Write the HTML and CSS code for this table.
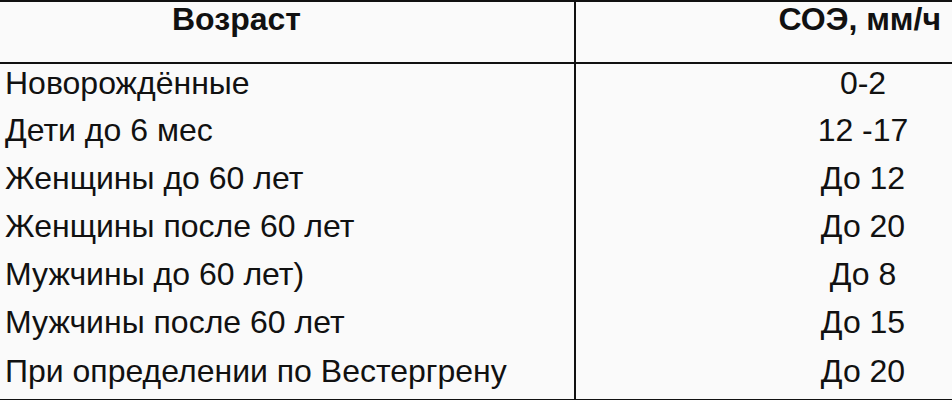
FILE: index.html
```html
<!DOCTYPE html>
<html lang="ru">
<head>
<meta charset="utf-8">
<link rel="stylesheet" href="styles.css">
</head>
<body>
<table class="esr">
  <colgroup>
    <col class="col-age">
    <col class="col-val">
  </colgroup>
  <thead>
    <tr>
      <th class="age-head">Возраст</th>
      <th class="val-head">СОЭ, мм/ч</th>
    </tr>
  </thead>
  <tbody>
    <tr><td class="age">Новорождённые</td><td class="val">0-2</td></tr>
    <tr><td class="age">Дети до 6 мес</td><td class="val">12 -17</td></tr>
    <tr><td class="age">Женщины до 60 лет</td><td class="val">До 12</td></tr>
    <tr><td class="age">Женщины после 60 лет</td><td class="val">До 20</td></tr>
    <tr><td class="age">Мужчины до 60 лет)</td><td class="val">До 8</td></tr>
    <tr><td class="age">Мужчины после 60 лет</td><td class="val">До 15</td></tr>
    <tr><td class="age">При определении по Вестергрену</td><td class="val">До 20</td></tr>
  </tbody>
</table>
</body>
</html>
```

FILE: styles.css
```css
html, body {
  margin: 0;
  padding: 0;
  background: #fafafa;
}
body {
  width: 952px;
  height: 400px;
  overflow: hidden;
  font-family: "Liberation Sans", Arial, sans-serif;
  color: #111;
}
.esr {
  width: 952px;
  table-layout: fixed;
  border-collapse: collapse;
  border-top: 2px solid #111;
  border-bottom: 2px solid #111;
}
.col-age {
  width: 575px;
}
.esr th, .esr td {
  padding: 0;
  vertical-align: top;
  white-space: nowrap;
}
.esr thead tr {
  height: 62px;
  border-bottom: 2px solid #111;
}
.esr th {
  font-weight: bold;
  font-size: 32px;
  line-height: 34px;
}
.esr .age-head {
  text-align: left;
  padding-left: 172px;
  border-right: 2px solid #111;
}
.esr .val-head {
  text-align: right;
  padding-right: 11px;
}
.esr tbody tr {
  height: 48.1px;
}
.esr td {
  font-size: 32px;
  line-height: 36px;
  padding-top: 1px;
}
.esr .age {
  padding-left: 5px;
  border-right: 2px solid #111;
}
.esr .val {
  text-align: center;
  padding-left: 198px;
}
```
